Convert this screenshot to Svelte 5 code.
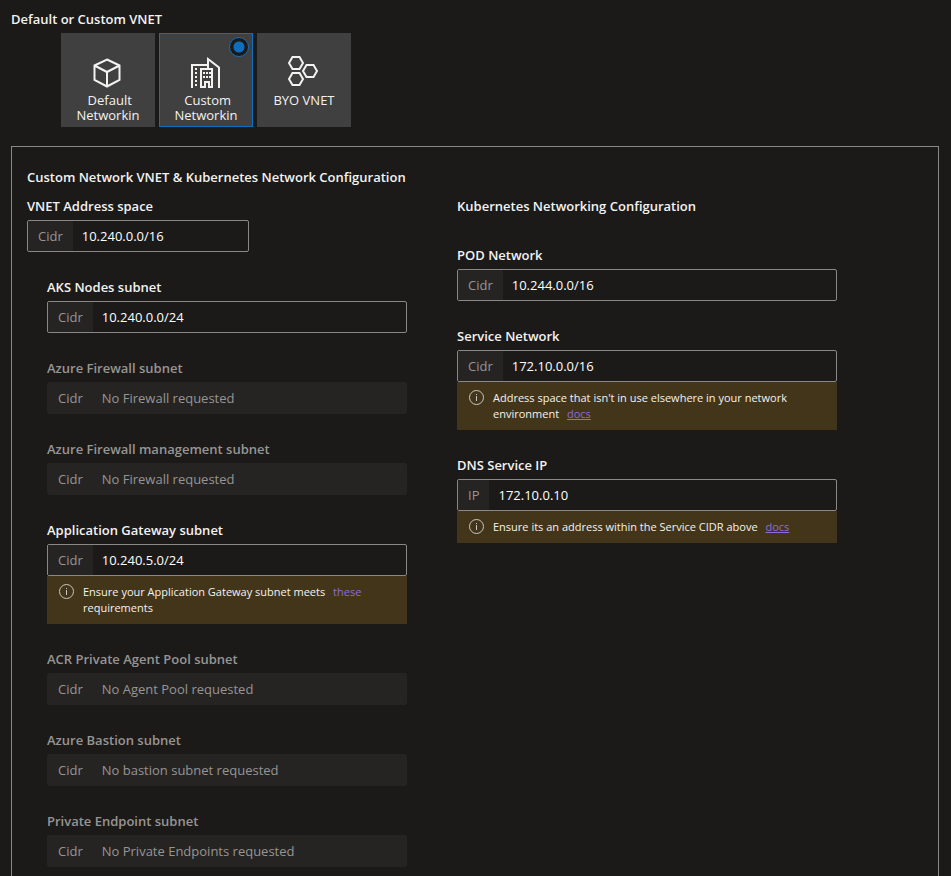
<script>
  let network = $state('custom');

  const choices = [
    { id: 'default', label: ' Default\nNetworkin' },
    { id: 'custom', label: ' Custom\nNetworkin' },
    { id: 'byo', label: 'BYO VNET' }
  ];

  let vnet = $state({ id: 'vnet', label: 'VNET Address space', prefix: 'Cidr', value: '10.240.0.0/16' });

  let subnets = $state([
    { id: 'aks', label: 'AKS Nodes subnet', prefix: 'Cidr', value: '10.240.0.0/24' },
    { id: 'afw', label: 'Azure Firewall subnet', prefix: 'Cidr', value: 'No Firewall requested', disabled: true },
    { id: 'afwmgmt', label: 'Azure Firewall management subnet', prefix: 'Cidr', value: 'No Firewall requested', disabled: true },
    {
      id: 'agw',
      label: 'Application Gateway subnet',
      prefix: 'Cidr',
      value: '10.240.5.0/24',
      note: { before: 'Ensure your Application Gateway subnet meets', link: 'these', after: 'requirements', plain: true }
    },
    { id: 'acr', label: 'ACR Private Agent Pool subnet', prefix: 'Cidr', value: 'No Agent Pool requested', disabled: true },
    { id: 'bastion', label: 'Azure Bastion subnet', prefix: 'Cidr', value: 'No bastion subnet requested', disabled: true },
    { id: 'pe', label: 'Private Endpoint subnet', prefix: 'Cidr', value: 'No Private Endpoints requested', disabled: true }
  ]);

  let kubernetes = $state([
    { id: 'pod', label: 'POD Network', prefix: 'Cidr', value: '10.244.0.0/16' },
    {
      id: 'service',
      label: 'Service Network',
      prefix: 'Cidr',
      value: '172.10.0.0/16',
      note: { before: "Address space that isn't in use elsewhere in your network environment", link: 'docs' }
    },
    {
      id: 'dns',
      label: 'DNS Service IP',
      prefix: 'IP',
      value: '172.10.0.10',
      note: { before: 'Ensure its an address within the Service CIDR above', link: 'docs' }
    }
  ]);
</script>

{#snippet field(f)}
  <div class="field" class:disabled={f.disabled}>
    <label class="heading" for={f.id}>{f.label}</label>
    <div class="box">
      <span class="prefix">{f.prefix}</span>
      <input id={f.id} type="text" bind:value={f.value} disabled={f.disabled} />
    </div>
    {#if f.note}
      <div class="note">
        <svg width="16" height="16" viewBox="0 0 16 16" aria-hidden="true">
          <circle cx="7.5" cy="7.5" r="7" fill="none" stroke="currentColor" />
          <path d="M7 6h1v5H7zM7 4h1v1H7z" fill="currentColor" />
        </svg>
        <p>{f.note.before} <a href="#{f.id}" class:plain={f.note.plain}>{f.note.link}</a> {f.note.after ?? ''}</p>
      </div>
    {/if}
  </div>
{/snippet}

<main>
  <fieldset>
    <legend class="heading">Default or Custom VNET</legend>
    <div class="tiles">
      {#each choices as c (c.id)}
        <label class="tile" class:selected={network === c.id}>
          <input type="radio" name="network" value={c.id} bind:group={network} />
          <svg width="32" height="32" viewBox="0 0 32 32" fill="none" stroke="currentColor" stroke-width="2" aria-hidden="true">
            {#if c.id === 'default'}
              <path d="M15 3.5 27.5 9.5V24L15 30.5 2.5 24V9.5zM2.5 9.5 15 16l12.5-6.5M15 16v14.5" />
            {:else if c.id === 'custom'}
              <path d="M2 32V9h16M18 13V3l11 8.5V32M11 32V13h11v19M10 31h5v-5h4v5h4" />
              <path d="M5 12h2v2H5zM5 16h2v2H5zM5 20h2v2H5zM5 24h2v2H5zM5 28h2v2H5zM13 16h2v2h-2zM16 16h2v2h-2zM19 16h2v2h-2zM13 20h2v2h-2zM16 20h2v2h-2zM19 20h2v2h-2z" fill="currentColor" stroke="none" />
            {:else}
              <path d="M4.5 1h7L15 7l-3.5 6h-7L1 7zM4.5 17h7L15 23l-3.5 6h-7L1 23zM18.5 9h7L29 15l-3.5 6h-7L15 15z" />
            {/if}
          </svg>
          <span>{c.label}</span>
        </label>
      {/each}
    </div>
  </fieldset>

  <section class="panel">
    <h2 class="heading">Custom Network VNET &amp; Kubernetes Network Configuration</h2>
    <div class="columns">
      <div class="column">
        <div class="short">{@render field(vnet)}</div>
        <div class="column nested">
          {#each subnets as s (s.id)}
            {@render field(s)}
          {/each}
        </div>
      </div>
      <div class="column">
        <h3 class="heading">Kubernetes Networking Configuration</h3>
        {#each kubernetes as k (k.id)}
          {@render field(k)}
        {/each}
      </div>
    </div>
  </section>
</main>

<style>
  :global(body) {
    background: #1b1a19;
  }

  main {
    box-sizing: border-box;
    min-height: 100vh;
    display: flex;
    flex-direction: column;
    padding: 4px 12px 0 11px;
    font: 13px/19px 'Open Sans', sans-serif;
    color: #f3f2f1;
  }

  .heading {
    display: block;
    margin: 0;
    padding: 6px 0 4px;
    font-size: 13px;
    line-height: 19px;
    font-weight: 600;
  }

  fieldset {
    margin: 0 0 19px;
    padding: 0;
    border: 0;
  }

  .tiles {
    display: flex;
    gap: 4px;
    margin-left: 50px;
  }

  .tile {
    position: relative;
    box-sizing: border-box;
    width: 94px;
    height: 94px;
    padding-top: 22px;
    display: flex;
    flex-direction: column;
    align-items: center;
    gap: 5px;
    border: 1px solid #404040;
    background: #404040;
    line-height: 15px;
    text-align: center;
    white-space: pre-wrap;
    cursor: pointer;
  }

  .tile.selected {
    border-color: #106ebe;
  }

  .tile input {
    appearance: none;
    position: absolute;
    top: 3px;
    right: 3px;
    width: 20px;
    height: 20px;
    margin: 0;
    border-radius: 50%;
  }

  .tile input:checked {
    border: 1px solid #106ebe;
    background: radial-gradient(circle, #106ebe 5px, #1b1a19 6px);
  }

  .panel {
    flex: 1;
    padding: 15px 15px 8px;
    border: 1px solid #8a8886;
    border-bottom: 0;
  }

  .columns {
    display: flex;
    gap: 50px;
  }

  .column {
    flex: 0 1 380px;
    min-width: 0;
    display: flex;
    flex-direction: column;
    gap: 20px;
  }

  .nested {
    flex: none;
    margin-left: 20px;
  }

  .short {
    width: 222px;
  }

  .box {
    box-sizing: border-box;
    height: 32px;
    display: flex;
    border: 1px solid #8a8886;
    border-radius: 2px;
    overflow: hidden;
  }

  .prefix {
    padding: 0 10px;
    line-height: 30px;
    background: #252423;
    color: #979593;
  }

  .box input {
    flex: 1;
    min-width: 0;
    padding: 0 9px;
    border: 0;
    outline: 0;
    background: transparent;
    color: #fff;
    font: inherit;
    line-height: 30px;
  }

  .disabled,
  .disabled .box input {
    color: #979593;
  }

  .disabled .box {
    border-color: #252423;
    background: #252423;
  }

  .note {
    display: flex;
    gap: 8px;
    padding: 8px 12px;
    background: #433519;
    font-size: 11px;
    line-height: 16px;
  }

  .note svg {
    flex: none;
    color: #c8c6c4;
  }

  .note p {
    margin: 0;
  }

  a {
    margin: 0 5px;
    color: #8f6bdc;
  }

  a.plain {
    text-decoration: none;
  }
</style>
